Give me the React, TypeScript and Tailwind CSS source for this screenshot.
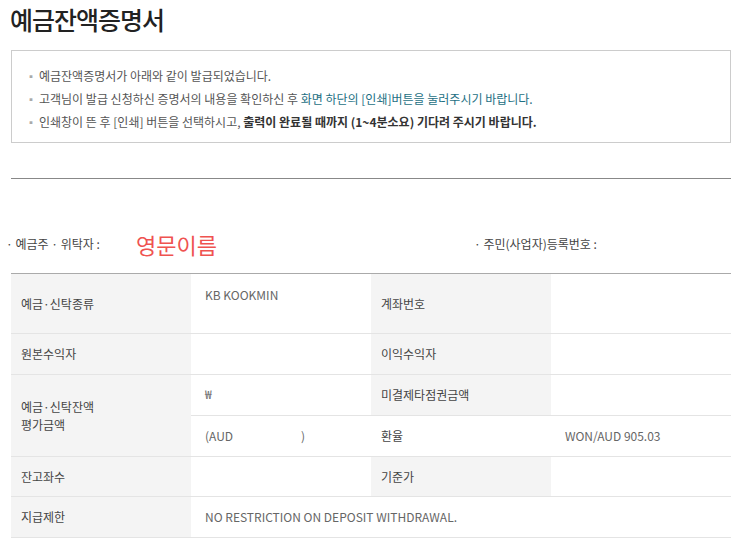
import React from 'react';

const label = 'bg-[#f4f4f4] px-[10px] text-[12px] text-[#444] align-middle';
const val = 'bg-white px-[14px] text-[12px] text-[#666] align-middle';
const row = 'border-b border-[#e4e4e4]';

export default function App() {
  return (
    <div className="w-[742px] h-[548px] bg-white overflow-hidden" style={{ fontFamily: '"Noto Sans CJK KR", "Noto Sans", sans-serif' }}>
      <h1 className="pl-[10px] pt-[2px] text-[25px] leading-[34px] font-medium text-[#222] tracking-[-1px]">예금잔액증명서</h1>
      <div className="mx-[11px] mt-[14px] h-[93px] border border-[#ccc] pl-[14px] pt-[14px] text-[12px] leading-[22px] text-[#555]">
        <p><span className="text-[#aaa] mr-[3px] text-[10px]">▪</span>예금잔액증명서가 아래와 같이 발급되었습니다.</p>
        <p><span className="text-[#aaa] mr-[3px] text-[10px]">▪</span>고객님이 발급 신청하신 증명서의 내용을 확인하신 후 <span className="text-[#1d6f83]">화면 하단의 [인쇄]버튼을 눌러주시기 바랍니다.</span></p>
        <p><span className="text-[#aaa] mr-[3px] text-[10px]">▪</span>인쇄창이 뜬 후 [인쇄] 버튼을 선택하시고, <span className="font-bold text-[#333]">출력이 완료될 때까지 (1~4분소요) 기다려 주시기 바랍니다.</span></p>
      </div>
      <div className="mx-[11px] mt-[35px] border-t border-[#888]" />
      <div className="flex items-center mt-[48px] h-[34px] pl-[6px] text-[12px] text-[#444]">
        <span className="w-[130px]">· 예금주 · 위탁자 :</span>
        <span className="text-[22px] text-[#ef5350] w-[338px]">영문이름</span>
        <span>· 주민(사업자)등록번호 :</span>
      </div>
      <table className="mx-[11px] mt-[12px] w-[720px] border-collapse border-t border-[#aaa] table-fixed">
        <tbody>
          <tr className={`${row} h-[60px]`}>
            <td className={`${label} w-[180px]`}>예금·신탁종류</td>
            <td className={`${val} w-[180px] align-top pt-[12px]`}>KB KOOKMIN</td>
            <td className={`${label} w-[180px]`}>계좌번호</td>
            <td className={`${val} w-[180px]`}></td>
          </tr>
          <tr className={`${row} h-[41px]`}>
            <td className={label}>원본수익자</td>
            <td className={val}></td>
            <td className={label}>이익수익자</td>
            <td className={val}></td>
          </tr>
          <tr className={`${row} h-[41px]`}>
            <td className={label} rowSpan={2}>예금·신탁잔액<br />평가금액</td>
            <td className={`${val} border-b border-[#e4e4e4] align-top pt-[10px]`}>₩</td>
            <td className={label}>미결제타점권금액</td>
            <td className={val}></td>
          </tr>
          <tr className={`${row} h-[41px]`}>
            <td className={val}>(AUD<span className="inline-block w-[68px]" />)</td>
            <td className="bg-white px-[10px] text-[12px] text-[#444] align-middle">환율</td>
            <td className={val}>WON/AUD 905.03</td>
          </tr>
          <tr className={`${row} h-[40px]`}>
            <td className={label}>잔고좌수</td>
            <td className={val}></td>
            <td className={label}>기준가</td>
            <td className={val}></td>
          </tr>
          <tr className={`${row} h-[41px]`}>
            <td className={label}>지급제한</td>
            <td className={val} colSpan={3}>NO RESTRICTION ON DEPOSIT WITHDRAWAL.</td>
          </tr>
        </tbody>
      </table>
    </div>
  );
}
